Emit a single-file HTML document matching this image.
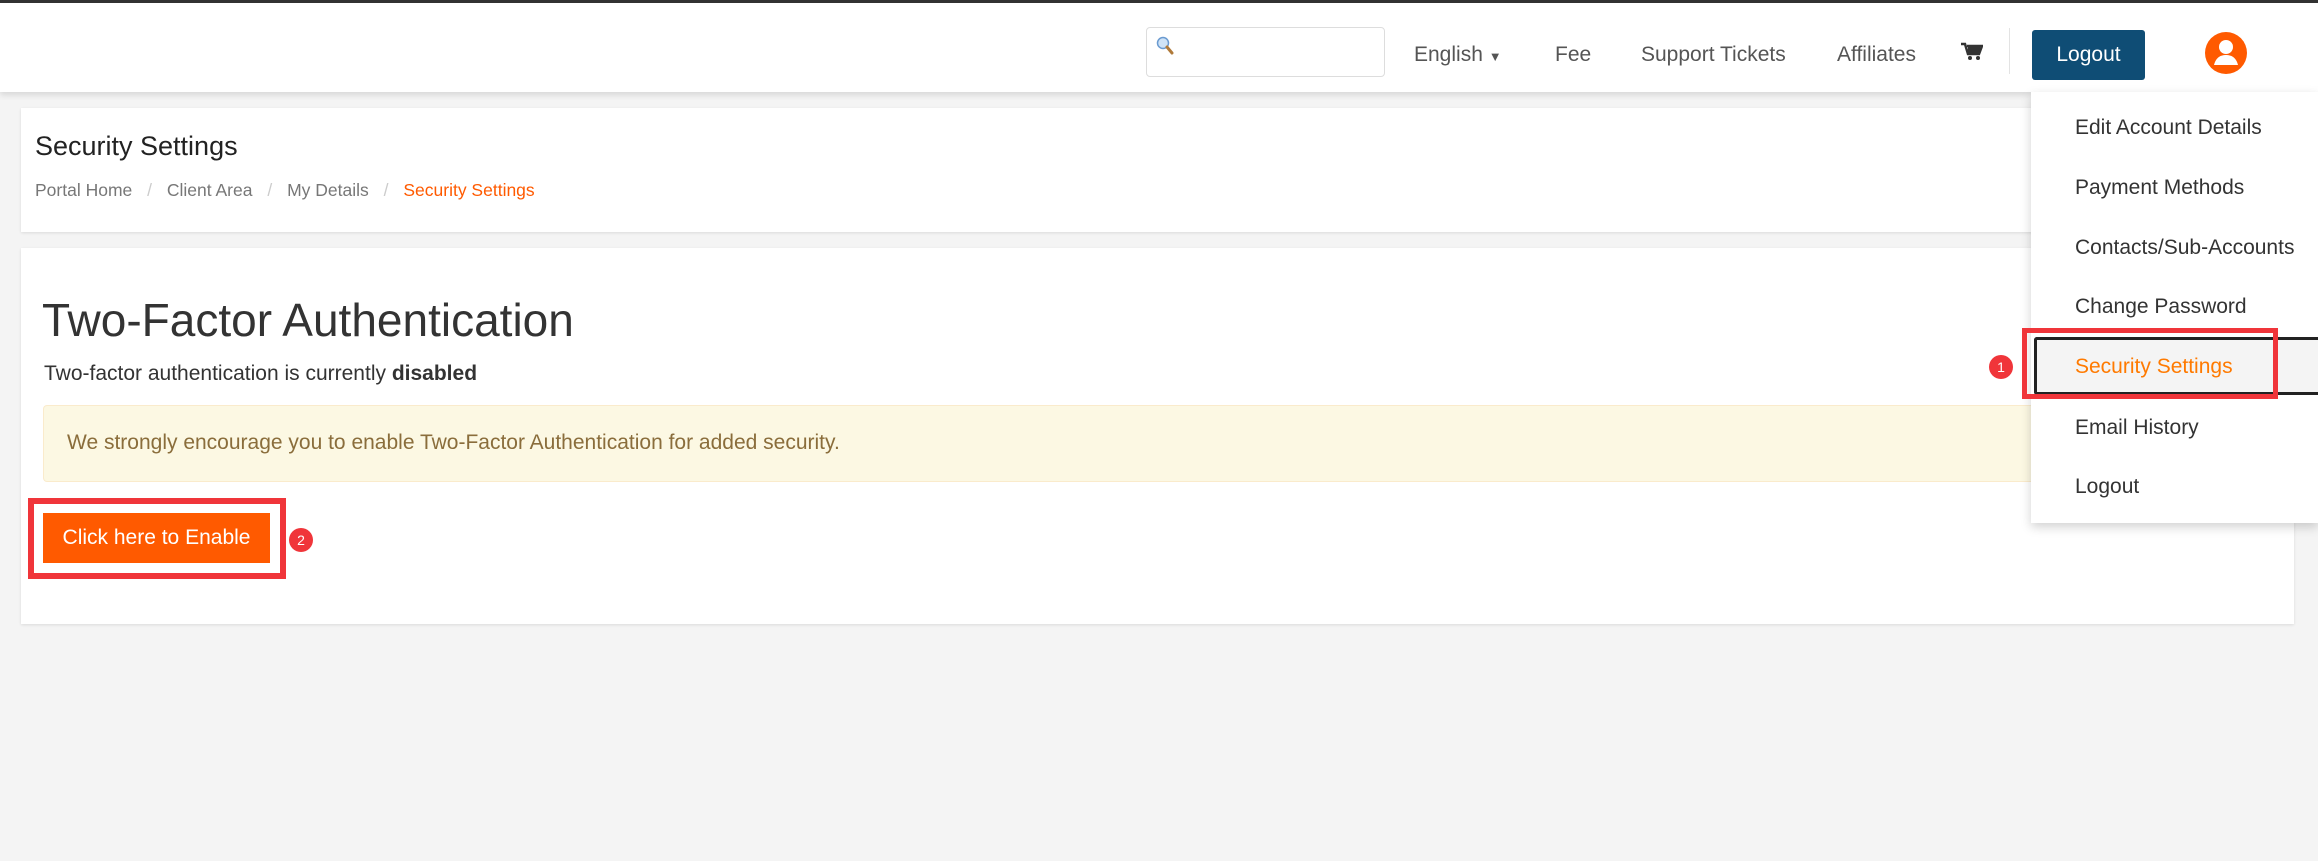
<!DOCTYPE html>
<html><head><meta charset="utf-8"><style>
*{margin:0;padding:0;box-sizing:border-box}
body{width:2318px;height:861px;overflow:hidden;background:#f4f4f4;font-family:"Liberation Sans",sans-serif;position:relative}
.a{position:absolute}
.top{left:0;top:0;width:2318px;height:3px;background:#333}
.hdr{left:0;top:3px;width:2318px;height:89px;background:#fff;box-shadow:0 3px 6px rgba(0,0,0,.12)}
.nav{font-size:21px;color:#555;top:43px}
.card{background:#fff;box-shadow:0 1px 3px rgba(0,0,0,.1)}
.dd{left:2031px;top:92px;width:287px;height:431px;background:#fff;box-shadow:0 4px 10px rgba(0,0,0,.18)}
.di{left:2075px;font-size:21px;color:#333}
.badge{width:24px;height:24px;border-radius:50%;background:#f0353a;color:#fff;font-size:14px;text-align:center;line-height:24px}
</style></head><body>
<div class="a top"></div>
<div class="a hdr"></div>
<div class="a" style="left:1146px;top:27px;width:239px;height:50px;border:1px solid #ddd;border-radius:4px;background:#fff"></div>
<svg class="a" style="left:1156px;top:36px" width="20" height="22" viewBox="0 0 20 22"><circle cx="7" cy="7" r="5.5" fill="#cfe3f7" stroke="#6a9ad0" stroke-width="1.5"/><path d="M11 11 L16 17" stroke="#b07a3a" stroke-width="3" stroke-linecap="round"/></svg>
<div class="a nav" style="left:1414px">English <span style="font-size:13px">▼</span></div>
<div class="a nav" style="left:1555px">Fee</div>
<div class="a nav" style="left:1641px">Support Tickets</div>
<div class="a nav" style="left:1837px">Affiliates</div>
<svg class="a" style="left:1961px;top:42px" width="22" height="20" viewBox="0 0 22 20"><path d="M0 2h4l3 10h11l3-8H6" fill="none" stroke="#333" stroke-width="2.5"/><rect x="7" y="5" width="12" height="6" fill="#333"/><circle cx="9" cy="16" r="2" fill="#333"/><circle cx="17" cy="16" r="2" fill="#333"/></svg>
<div class="a" style="left:2009px;top:28px;width:1px;height:46px;background:#e3e3e3"></div>
<div class="a" style="left:2032px;top:30px;width:113px;height:50px;background:#0f4d75;border-radius:3px;color:#fff;font-size:21px;text-align:center;line-height:50px">Logout</div>
<svg class="a" style="left:2205px;top:32px" width="42" height="42" viewBox="0 0 42 42"><circle cx="21" cy="21" r="21" fill="#ff5a00"/><circle cx="21" cy="15" r="7" fill="#fff"/><path d="M9 33c2-8 7-10 12-10s10 2 12 10z" fill="#fff"/></svg>

<div class="a card" style="left:21px;top:108px;width:2273px;height:124px"></div>
<div class="a" style="left:35px;top:131px;font-size:27px;color:#222">Security Settings</div>
<div class="a" style="left:35px;top:180px;font-size:17.5px;color:#777">Portal Home <span style="color:#ccc;margin:0 10px">/</span> Client Area <span style="color:#ccc;margin:0 10px">/</span> My Details <span style="color:#ccc;margin:0 10px">/</span> <span style="color:#ff5a00">Security Settings</span></div>

<div class="a card" style="left:21px;top:248px;width:2273px;height:376px"></div>
<div class="a" style="left:42px;top:293px;font-size:46px;color:#333">Two-Factor Authentication</div>
<div class="a" style="left:44px;top:362px;font-size:21px;color:#333">Two-factor authentication is currently <b>disabled</b></div>
<div class="a" style="left:43px;top:405px;width:2229px;height:77px;background:#fcf8e3;border:1px solid #faebcc;border-radius:4px"></div>
<div class="a" style="left:67px;top:431px;font-size:21px;color:#8a6d3b">We strongly encourage you to enable Two-Factor Authentication for added security.</div>
<div class="a" style="left:28px;top:498px;width:258px;height:81px;border:6px solid #f0353a"></div>
<div class="a" style="left:43px;top:513px;width:227px;height:50px;background:#ff5a00;color:#fff;font-size:21px;text-align:center;line-height:50px">Click here to Enable</div>
<div class="a badge" style="left:289px;top:528px">2</div>

<div class="a dd"></div>
<div class="a di" style="top:116px">Edit Account Details</div>
<div class="a di" style="top:176px">Payment Methods</div>
<div class="a di" style="top:236px">Contacts/Sub-Accounts</div>
<div class="a di" style="top:295px">Change Password</div>
<div class="a" style="left:2034px;top:337px;width:284px;height:58px;background:#f4f4f4;border:3px solid #222;border-right:none;border-radius:3px 0 0 3px"></div>
<div class="a di" style="top:355px;color:#ff7a00">Security Settings</div>
<div class="a" style="left:2022px;top:328px;width:256px;height:71px;border:5px solid #f0353a"></div>
<div class="a badge" style="left:1989px;top:355px">1</div>
<div class="a di" style="top:416px">Email History</div>
<div class="a di" style="top:475px">Logout</div>
</body></html>
